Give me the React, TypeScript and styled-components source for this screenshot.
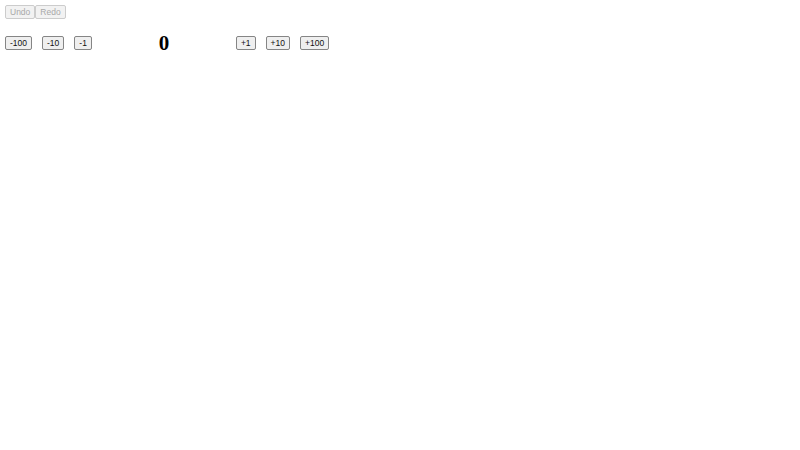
import React, { useState } from "react";
import styled, { createGlobalStyle } from "styled-components";

const GlobalStyle = createGlobalStyle`
  body {
    margin: 5px;
    font-family: "Liberation Serif", "Times New Roman", serif;
    background: #fff;
  }
`;

const Toolbar = styled.div`
  display: flex;
`;

const Button = styled.button`
  font-family: "Liberation Sans", Arial, sans-serif;
  font-size: 8.5px;
  font-weight: normal;
  line-height: 10px;
  padding: 1px 4px;
  margin: 0;
  color: #111;
  background: #efefef;
  border: 1px solid #858585;
  border-radius: 2px;
  cursor: pointer;

  &:disabled {
    color: #a8a8a8;
    background: #f2f2f2;
    border-color: #cccccc;
    cursor: default;
  }
`;

const CounterRow = styled.div`
  display: flex;
  align-items: center;
  gap: 10px;
  margin-top: 17px;
`;

const Value = styled.h1`
  width: 124px;
  margin: 0;
  text-align: center;
  font-size: 21px;
  font-weight: bold;
  line-height: 14px;
`;

const steps = [-100, -10, -1];

export default function App() {
  const [history, setHistory] = useState<number[]>([0]);
  const [index, setIndex] = useState(0);
  const value = history[index];

  const change = (delta: number) => {
    const next = history.slice(0, index + 1);
    next.push(value + delta);
    setHistory(next);
    setIndex(next.length - 1);
  };

  return (
    <>
      <GlobalStyle />
      <Toolbar>
        <Button disabled={index === 0} onClick={() => setIndex(index - 1)}>
          Undo
        </Button>
        <Button
          disabled={index === history.length - 1}
          onClick={() => setIndex(index + 1)}
        >
          Redo
        </Button>
      </Toolbar>
      <CounterRow>
        {steps.map((s) => (
          <Button key={s} onClick={() => change(s)}>
            {s}
          </Button>
        ))}
        <Value>{value}</Value>
        {steps
          .slice()
          .reverse()
          .map((s) => (
            <Button key={-s} onClick={() => change(-s)}>
              +{-s}
            </Button>
          ))}
      </CounterRow>
    </>
  );
}
